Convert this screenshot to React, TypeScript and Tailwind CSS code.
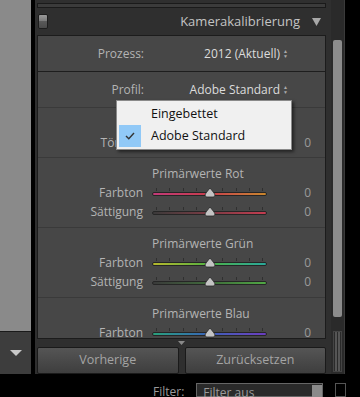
import React from 'react';

const font = { fontFamily: '"Open Sans", "Noto Sans", sans-serif' };

type SliderProps = {
  label: string;
  track: string;
};

function Slider({ label, track }: SliderProps) {
  return (
    <div className="flex h-[19px] items-center">
      <div className="w-[105px] text-right text-[12px] text-[#b4b4b4]">{label}</div>
      <div className="relative ml-[9px] h-[19px] w-[115px]">
        {/* ticks */}
        <div className="absolute left-[4px] right-[4px] top-[5px] flex justify-between">
          {[0, 1, 2, 3, 4, 5, 6, 7, 8].map((i) => (
            <div key={i} className="h-[3px] w-px bg-[#303030]" />
          ))}
        </div>
        <div className={`absolute left-0 right-0 top-[9px] h-[4px] rounded-full border border-[#262626] ${track}`} />
        <svg className="absolute left-[52px] top-[5px]" width="12" height="10" viewBox="0 0 12 10">
          <path d="M6 0 L10 5 Q12 7 10 9 L2 9 Q0 7 2 5 Z" fill="#c4c4c4" stroke="#2a2a2a" strokeWidth="0.8" />
        </svg>
      </div>
      <div className="flex-1 pr-[14px] text-right text-[12px] text-[#9a9a9a]">0</div>
    </div>
  );
}

function Section({ title, children }: { title: string; children: React.ReactNode }) {
  return (
    <div className="flex flex-col border-b border-[#3a3a3a] pb-[6px] pt-[6px]">
      <div className="pl-[114px] text-[12px] leading-[19px] text-[#b4b4b4]">{title}</div>
      {children}
    </div>
  );
}

function PopupRow({ label, value, dark }: { label: string; value: string; dark?: boolean }) {
  return (
    <div className={`flex h-[36px] items-center ${dark ? 'border-b border-[#1e1e1e]' : 'border-b border-[#3a3a3a]'}`}>
      <div className="w-[106px] text-right text-[12px] text-[#b4b4b4]">{label}</div>
      <div className="flex flex-1 items-center justify-end pr-[37px] text-[12px] text-[#dcdcdc]">
        <span>{value}</span>
        <span className="ml-[3px] flex flex-col justify-center text-[5px] leading-[5px] text-[#aaaaaa]">
          <span>▲</span>
          <span>▼</span>
        </span>
      </div>
    </div>
  );
}

export default function App() {
  return (
    <div className="relative flex h-[397px] w-[360px] flex-col overflow-hidden bg-black" style={font}>
      <div className="flex h-[381px]">
        {/* left column */}
        <div className="flex w-[31px] flex-col">
          <div className="flex-1 bg-[#8a8a8a]" />
          <div className="h-px bg-[#1a1a1a]" />
          <div className="flex h-[42px] items-center justify-center bg-[#3d3d3d]">
            <svg width="12" height="6" viewBox="0 0 12 6">
              <path d="M0 0 H12 L6 6 Z" fill="#c8c8c8" />
            </svg>
          </div>
        </div>
        <div className="w-[4px] bg-black" />

        {/* main */}
        <div className="flex w-[296px] flex-col bg-[#2f2f2f] pl-[2px] pr-[5px]">
          <div className="mt-[3px] h-[5px] border border-[#1a1a1a] bg-[#3b3b3b]" />
          {/* header */}
          <div className="flex h-[27px] items-center">
            <div className="ml-px flex h-[15px] w-[10px] flex-col overflow-hidden rounded-[2px] border border-[#1c1c1c]">
              <div className="h-[6px] bg-gradient-to-b from-[#9a9a9a] to-[#7a7a7a]" />
              <div className="flex-1 bg-gradient-to-b from-[#5a5a5a] to-[#4a4a4a]" />
            </div>
            <div className="flex-1 pr-[12px] text-right text-[13px] text-[#c4c4c4]">Kamerakalibrierung</div>
            <svg className="mr-[5px]" width="9" height="8" viewBox="0 0 9 8">
              <path d="M0 0 H9 L4.5 8 Z" fill="#a8a8a8" />
            </svg>
          </div>

          {/* panel */}
          <div className="relative h-[304px] overflow-hidden border border-[#1c1c1c] bg-[#474747]">
            <PopupRow label="Prozess:" value="2012 (Aktuell)" dark />
            <PopupRow label="Profil:" value="Adobe Standard" />

            <div className="flex flex-col border-b border-[#3a3a3a] pb-[5px] pt-[6px]">
              <div className="pl-[114px] text-[12px] leading-[19px] text-[#b4b4b4]">Schatten</div>
              <Slider label="Tönung" track="bg-gradient-to-r from-[#3aa040] via-[#8a8a8a] to-[#b0409a]" />
            </div>

            <Section title="Primärwerte Rot">
              <Slider label="Farbton" track="bg-gradient-to-r from-[#c23a78] via-[#c83c4a] to-[#c8862a]" />
              <Slider label="Sättigung" track="bg-gradient-to-r from-[#3a3a3a] via-[#7a3a44] to-[#c43c50]" />
            </Section>

            <Section title="Primärwerte Grün">
              <Slider label="Farbton" track="bg-gradient-to-r from-[#b4b82c] via-[#4cb040] to-[#2aa89a]" />
              <Slider label="Sättigung" track="bg-gradient-to-r from-[#3a3a3a] via-[#3e6a3a] to-[#50a844]" />
            </Section>

            <Section title="Primärwerte Blau">
              <Slider label="Farbton" track="bg-gradient-to-r from-[#2aa07a] via-[#3a60b8] to-[#6a3cc0]" />
            </Section>

            {/* profile menu */}
            <div className="absolute left-[78px] top-[64px] w-[176px] border border-[#8a8a8a] bg-[#f0f0f0] py-[2px] shadow-[2px_2px_3px_rgba(0,0,0,0.5)]">
              <div className="flex h-[22px] items-center">
                <div className="w-[34px]" />
                <span className="text-[12.5px] text-[#111]">Eingebettet</span>
              </div>
              <div className="flex h-[22px] items-center">
                <div className="ml-[2px] mr-[10px] flex h-[22px] w-[22px] items-center justify-center bg-[#91c9f7]">
                  <svg width="10" height="8" viewBox="0 0 10 8">
                    <path d="M1 4 L3.8 6.8 L9 1" fill="none" stroke="#333" strokeWidth="1.4" />
                  </svg>
                </div>
                <span className="text-[12.5px] text-[#111]">Adobe Standard</span>
              </div>
            </div>
          </div>

          {/* small triangle */}
          <div className="flex h-[8px] justify-center">
            <svg className="mt-[2px]" width="7" height="4" viewBox="0 0 7 4">
              <path d="M0 0 H7 L3.5 4 Z" fill="#8a8a8a" />
            </svg>
          </div>

          {/* buttons */}
          <div className="flex gap-[6px]">
            <button className="h-[27px] flex-1 rounded-[2px] border border-[#1a1a1a] bg-gradient-to-b from-[#555] to-[#3e3e3e] text-[12.5px] text-[#a4a4a4]">
              Vorherige
            </button>
            <button className="h-[27px] flex-1 rounded-[2px] border border-[#1a1a1a] bg-gradient-to-b from-[#555] to-[#3e3e3e] text-[12.5px] text-[#a4a4a4]">
              Zurücksetzen
            </button>
          </div>
          <div className="flex-1" />
        </div>

        {/* scrollbar */}
        <div className="flex w-[14px] flex-col border-r border-[#3a3a3a] bg-[#2a2a2a] px-[2px]">
          <div className="mt-[40px] h-[277px] rounded-[2px] bg-[#8c8c8c]" />
          <div className="flex-1" />
          <div className="mb-[2px] flex h-[41px] justify-between border border-[#444] px-[1px]">
            {[0, 1, 2, 3].map((i) => (
              <div key={i} className="w-px bg-[#555]" />
            ))}
          </div>
        </div>
        <div className="flex-1 bg-black" />
      </div>

      {/* bottom filter bar */}
      <div className="h-px bg-[#3a3a3a]" />
      <div className="flex flex-1 items-start bg-black">
        <span className="ml-[153px] mt-[11px] text-[12px] leading-[14px] text-[#9a9a9a]">Filter:</span>
        <div className="ml-[12px] mt-[9px] flex h-[14px] w-[127px] items-start justify-between border border-[#666] bg-[#2a2a2a] pl-[6px] pt-[2px] text-[12px] leading-[14px] text-[#9a9a9a]">
          <span>Filter aus</span>
          <div className="mt-[-1px] h-[12px] w-[10px] bg-[#8a8a8a]" />
        </div>
        <div className="ml-[12px] mt-[9px] h-[14px] w-[11px] border border-[#555]" />
      </div>
    </div>
  );
}
